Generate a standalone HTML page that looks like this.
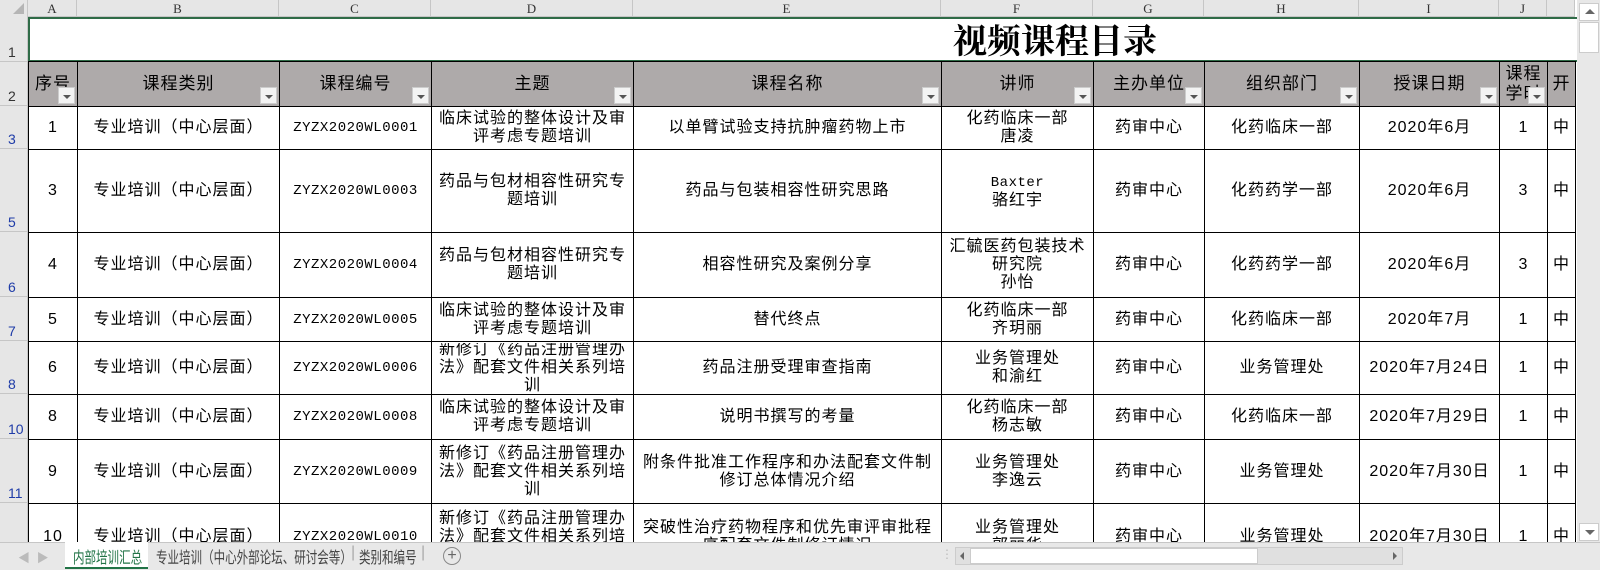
<!DOCTYPE html>
<html><head><meta charset="utf-8"><style>
*{margin:0;padding:0;box-sizing:border-box}
body{width:1600px;height:570px;overflow:hidden;background:#fff;position:relative;font-family:"Liberation Sans","Noto Sans CJK SC",sans-serif;color:#000}
.colhdr{position:absolute;top:0;left:0;width:1575px;height:17px;background:#e6e6e6;border-bottom:1px solid #c6c6c6}
.colhdr div{position:absolute;top:0;height:17px;border-right:1px solid #c6c6c6;text-align:center;font:13px "Liberation Serif",serif;color:#333;line-height:18px}
.rowhdr{position:absolute;left:0;width:28px;background:#e6e6e6;border-bottom:1px solid #c6c6c6;border-right:1px solid #c6c6c6;font:14px "Liberation Sans",sans-serif;color:#333}
.rowhdr span{position:absolute;left:8px;bottom:1px}
.rowhdr.b{color:#1f3ca8}
.corner{position:absolute;left:0;top:0;width:28px;height:17px;background:#e6e6e6;border-right:1px solid #c6c6c6}
.corner:after{content:"";position:absolute;right:3px;bottom:3px;border-left:11px solid transparent;border-bottom:11px solid #b5b5b5}
.title{position:absolute;left:28px;top:17px;width:1549px;height:45px;border:2px solid #2f6b47;border-right:none;background:#fff;overflow:hidden}
.title span{position:absolute;left:923px;top:0px;font:bold 34px/40px "Noto Serif CJK SC",serif}
table{position:absolute;left:28px;top:61px;border-collapse:collapse;table-layout:fixed;width:1547px}
td{border:1px solid #000;text-align:center;vertical-align:middle;font-size:16px;letter-spacing:1px;line-height:18px;overflow:hidden;padding:0 2px;white-space:nowrap}
td.w{white-space:normal}
tr.h td{background:#aeaaaa;position:relative;font-size:17px}
.dd{position:absolute;right:2px;bottom:2px;width:17px;height:17px;background:#f3f3f3;border:1px solid #ccc}
.dd:after{content:"";position:absolute;left:4px;top:7px;border-left:4px solid transparent;border-right:4px solid transparent;border-top:4px solid #555}
.code,.m{font-family:"Liberation Mono",monospace;font-size:14px;letter-spacing:.5px}
.vs{position:absolute;left:1577px;top:0;width:23px;height:542px;background:#e8e8e8}
.tabs{position:absolute;left:0;top:542px;width:1600px;height:28px;background:#e8e8e8;border-top:1px solid #c6c6c6;font-size:16px;color:#444}
.tabs span{position:absolute;top:1px}
.tabs span.t{transform:scaleX(.72);transform-origin:left top;white-space:nowrap}
</style></head><body>
<div class="colhdr">
<div style="left:28px;width:49px">A</div><div style="left:77px;width:202px">B</div><div style="left:279px;width:152px">C</div><div style="left:431px;width:202px">D</div><div style="left:633px;width:308px">E</div><div style="left:941px;width:152px">F</div><div style="left:1093px;width:111px">G</div><div style="left:1204px;width:155px">H</div><div style="left:1359px;width:140px">I</div><div style="left:1499px;width:48px">J</div><div style="left:1547px;width:28px"></div>
</div>
<div class="corner"></div>
<div class="rowhdr" style="top:17px;height:45px"><span>1</span></div>
<div class="rowhdr" style="top:62px;height:44px"><span>2</span></div>
<div class="rowhdr b" style="top:106px;height:43px"><span>3</span></div>
<div class="rowhdr b" style="top:149px;height:83px"><span>5</span></div>
<div class="rowhdr b" style="top:232px;height:65px"><span>6</span></div>
<div class="rowhdr b" style="top:297px;height:44px"><span>7</span></div>
<div class="rowhdr b" style="top:341px;height:53px"><span>8</span></div>
<div class="rowhdr b" style="top:394px;height:45px"><span>10</span></div>
<div class="rowhdr b" style="top:439px;height:64px"><span>11</span></div>
<div class="rowhdr b" style="top:503px;height:60px"><span></span></div>
<div class="title"><span>视频课程目录</span></div>
<table>
<colgroup><col style="width:49px"><col style="width:202px"><col style="width:152px"><col style="width:202px"><col style="width:308px"><col style="width:152px"><col style="width:111px"><col style="width:155px"><col style="width:140px"><col style="width:48px"><col style="width:28px"></colgroup>
<tr class="h" style="height:45px"><td>序号<i class="dd"></i></td><td>课程类别<i class="dd"></i></td><td>课程编号<i class="dd"></i></td><td>主题<i class="dd"></i></td><td>课程名称<i class="dd"></i></td><td>讲师<i class="dd"></i></td><td>主办单位<i class="dd"></i></td><td>组织部门<i class="dd"></i></td><td>授课日期<i class="dd"></i></td><td class="w" style="line-height:20px">课程学时<i class="dd"></i></td><td>开</td></tr>
<tr style="height:43px"><td>1</td><td>专业培训（中心层面）</td><td class="code">ZYZX2020WL0001</td><td class="w">临床试验的整体设计及审评考虑专题培训</td><td>以单臂试验支持抗肿瘤药物上市</td><td>化药临床一部<br>唐凌</td><td>药审中心</td><td>化药临床一部</td><td>2020年6月</td><td>1</td><td>中</td></tr>
<tr style="height:83px"><td>3</td><td>专业培训（中心层面）</td><td class="code">ZYZX2020WL0003</td><td class="w">药品与包材相容性研究专题培训</td><td>药品与包装相容性研究思路</td><td><span class="m">Baxter</span><br>骆红宇</td><td>药审中心</td><td>化药药学一部</td><td>2020年6月</td><td>3</td><td>中</td></tr>
<tr style="height:65px"><td>4</td><td>专业培训（中心层面）</td><td class="code">ZYZX2020WL0004</td><td class="w">药品与包材相容性研究专题培训</td><td>相容性研究及案例分享</td><td>汇毓医药包装技术<br>研究院<br>孙怡</td><td>药审中心</td><td>化药药学一部</td><td>2020年6月</td><td>3</td><td>中</td></tr>
<tr style="height:44px"><td>5</td><td>专业培训（中心层面）</td><td class="code">ZYZX2020WL0005</td><td class="w">临床试验的整体设计及审评考虑专题培训</td><td>替代终点</td><td>化药临床一部<br>齐玥丽</td><td>药审中心</td><td>化药临床一部</td><td>2020年7月</td><td>1</td><td>中</td></tr>
<tr style="height:53px"><td>6</td><td>专业培训（中心层面）</td><td class="code">ZYZX2020WL0006</td><td class="w"><div style="height:51px;display:flex;align-items:center;justify-content:center;overflow:hidden"><div>新修订《药品注册管理办法》配套文件相关系列培训</div></div></td><td>药品注册受理审查指南</td><td>业务管理处<br>和渝红</td><td>药审中心</td><td>业务管理处</td><td>2020年7月24日</td><td>1</td><td>中</td></tr>
<tr style="height:45px"><td>8</td><td>专业培训（中心层面）</td><td class="code">ZYZX2020WL0008</td><td class="w">临床试验的整体设计及审评考虑专题培训</td><td>说明书撰写的考量</td><td>化药临床一部<br>杨志敏</td><td>药审中心</td><td>化药临床一部</td><td>2020年7月29日</td><td>1</td><td>中</td></tr>
<tr style="height:64px"><td>9</td><td>专业培训（中心层面）</td><td class="code">ZYZX2020WL0009</td><td class="w">新修订《药品注册管理办法》配套文件相关系列培训</td><td>附条件批准工作程序和办法配套文件制<br>修订总体情况介绍</td><td>业务管理处<br>李逸云</td><td>药审中心</td><td>业务管理处</td><td>2020年7月30日</td><td>1</td><td>中</td></tr>
<tr style="height:66px"><td>10</td><td>专业培训（中心层面）</td><td class="code">ZYZX2020WL0010</td><td class="w">新修订《药品注册管理办法》配套文件相关系列培训</td><td>突破性治疗药物程序和优先审评审批程<br>序配套文件制修订情况</td><td>业务管理处<br>郭丽华</td><td>药审中心</td><td>业务管理处</td><td>2020年7月30日</td><td>1</td><td>中</td></tr>
</table>
<div class="vs">
<div style="position:absolute;left:2px;top:3px;width:20px;height:18px;background:#fff;border:1px solid #ccc"></div>
<div style="position:absolute;left:8px;top:9px;border-left:5px solid transparent;border-right:5px solid transparent;border-bottom:5px solid #666"></div>
<div style="position:absolute;left:2px;top:22px;width:20px;height:31px;background:#fff;border:1px solid #ccc"></div>
<div style="position:absolute;left:2px;top:523px;width:20px;height:18px;background:#fff;border:1px solid #ccc"></div>
<div style="position:absolute;left:8px;top:530px;border-left:5px solid transparent;border-right:5px solid transparent;border-top:5px solid #666"></div>
</div>
<div class="tabs">
<span style="left:18px;color:#bbb;font-size:12px;top:6px">◀ &nbsp;▶</span>
<div style="position:absolute;left:65px;top:-1px;width:83px;height:27px;background:#fff;border-bottom:2px solid #217346"></div>
<span class="t" style="left:73px;color:#217346">内部培训汇总</span>
<span class="t" style="left:156px">专业培训（中心外部论坛、研讨会等）</span>
<span style="left:351px;color:#aaa">|</span>
<span class="t" style="left:359px">类别和编号</span>
<span style="left:421px;color:#aaa">|</span>
<span style="left:443px;top:4px;width:18px;height:18px;border:1px solid #888;border-radius:50%;text-align:center;line-height:15px;font-size:16px;color:#666">+</span>
<span style="left:941px;top:4px;color:#bbb;font-size:12px">⋮</span>
<div style="position:absolute;left:955px;top:4px;width:448px;height:18px;background:#e0e0e0;border:1px solid #ccc"></div>
<div style="position:absolute;left:970px;top:5px;width:288px;height:16px;background:#fff;border:1px solid #ccc"></div>
<div style="position:absolute;left:960px;top:9px;border-top:4px solid transparent;border-bottom:4px solid transparent;border-right:4px solid #666"></div>
<div style="position:absolute;left:1393px;top:9px;border-top:4px solid transparent;border-bottom:4px solid transparent;border-left:4px solid #666"></div>
</div>
</body></html>
